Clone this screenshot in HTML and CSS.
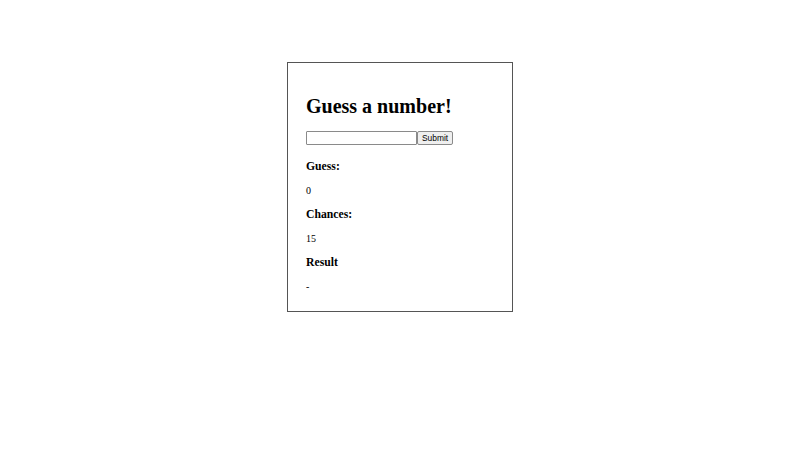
FILE: index.html
```html
<!DOCTYPE html>
<html>
<head>
<meta charset="utf-8">
<title>Guess a number</title>
<link rel="stylesheet" href="styles.css">
</head>
<body>
<div class="card">
  <h1 class="title">Guess a number!</h1>
  <form class="form" onsubmit="return false">
    <input class="field" type="text"><button class="submit" type="submit">Submit</button>
  </form>
  <h3 class="label">Guess:</h3>
  <p class="value">0</p>
  <h3 class="label">Chances:</h3>
  <p class="value">15</p>
  <h3 class="label">Result</h3>
  <p class="value">-</p>
</div>
</body>
</html>
```
FILE: styles.css
```css
html, body {
  background: #fff;
}
body {
  margin: 0;
  padding: 62px 0 0;
  font-family: "Liberation Serif", "Times New Roman", serif;
  color: #000;
}
.card {
  box-sizing: border-box;
  width: 226px;
  margin: 0 auto;
  border: 1px solid #555;
  padding: 19px 18px 9px;
}
.title {
  font-size: 20px;
  font-weight: bold;
  margin: 13.4px 0 12.4px;
}
.form {
  margin: 0;
  padding-bottom: 3px;
  display: flex;
  align-items: stretch;
}
.field {
  box-sizing: border-box;
  width: 111px;
  height: 14px;
  margin: 0;
  padding: 0 2px;
  border: 1px solid #8a8a8a;
  border-radius: 1px;
  font-size: 8.3px;
  background: #fff;
}
.submit {
  box-sizing: border-box;
  height: 14px;
  margin: 0;
  padding: 0 4px;
  border: 1px solid #8a8a8a;
  border-radius: 2px;
  background: #efefef;
  font-family: "Liberation Sans", Arial, sans-serif;
  font-size: 8.4px;
  line-height: 1;
  color: #000;
}
.label {
  font-size: 11.7px;
  font-weight: bold;
  margin: 12px 0;
}
.value {
  font-size: 10px;
  margin: 10px 0;
}
```
